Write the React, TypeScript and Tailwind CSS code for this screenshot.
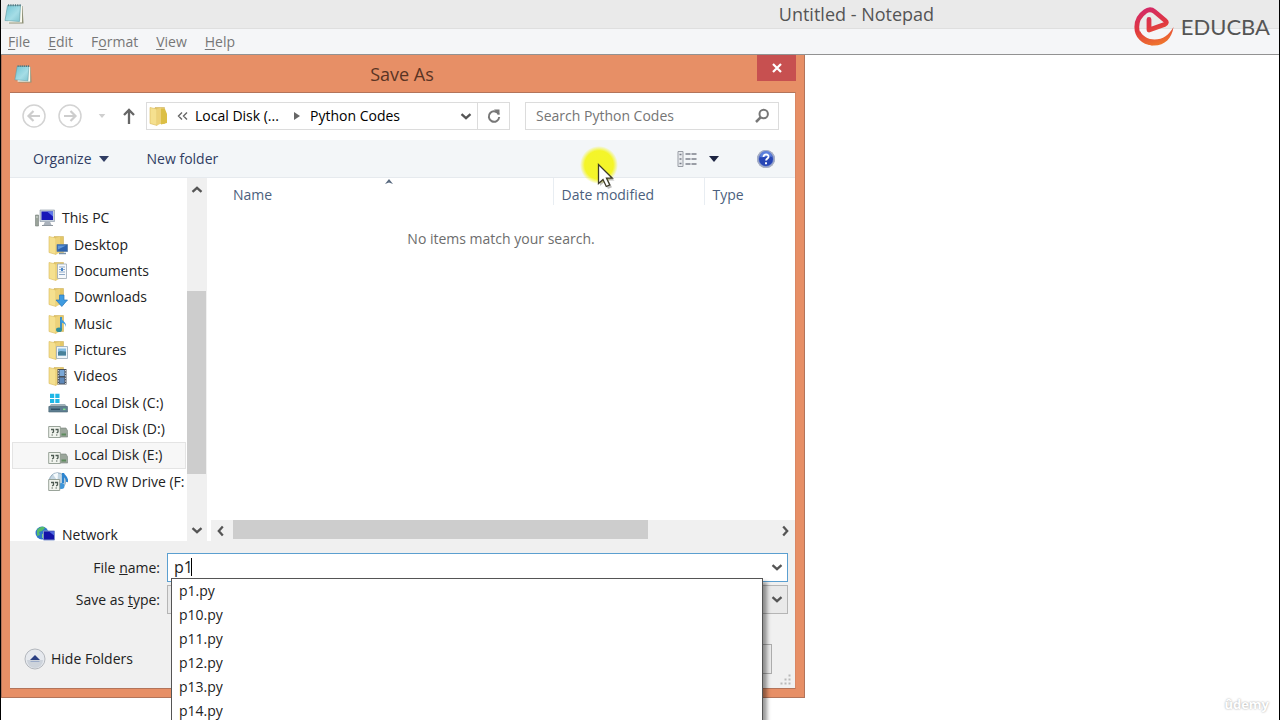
import React, { useState } from "react";

function NotepadIcon({ className }: { className: string }) {
  return (
    <svg viewBox="0 0 20 22" className={className} aria-hidden="true">
      <defs>
        <linearGradient id="pad" x1="0" y1="0" x2="1" y2="1">
          <stop offset="0" stopColor="#6fc3d2" />
          <stop offset=".6" stopColor="#a5dde6" />
          <stop offset="1" stopColor="#7fc4cf" />
        </linearGradient>
      </defs>
      <path d="M4 3h14.5l1 17.500H5z" fill="#8f9278" />
      <path d="M4 3h14v16.500H4z" fill="#fbfaf0" />
      <path d="M3.500 2.500h13L15.500 18.500 1 17.500z" fill="url(#pad)" stroke="#5d9aa5" strokeWidth=".6" />
      <path d="M4 2.200h13.500" stroke="#4e7780" strokeWidth="2" strokeDasharray="1.2 1.1" />
    </svg>
  );
}

type FolderKind = "desktop" | "documents" | "downloads" | "music" | "pictures" | "videos" | "plain";

function FolderIcon({ kind, className }: { kind: FolderKind; className: string }) {
  return (
    <svg viewBox="0 0 20 20" className={className} aria-hidden="true">
      <path d="M6 1.500h9.500v16H6z" fill="#e3c768" stroke="#c9a94c" strokeWidth=".5" />
      <path d="M1 1.500l7 1.500v16.500l-7-2z" fill="#f5e08f" stroke="#d8b95c" strokeWidth=".6" />
      <path d="M8 3l4-1.500v16L8 19.500z" fill="#edd27a" />
      {kind === "plain" && <path d="M12 3h4l2 5v9l-6 1.500z" fill="#dcbf45" />}
      {kind === "desktop" && (
        <g>
          <path d="M9 9.500h10.500v7H9z" fill="#2c62ae" stroke="#5b7fa5" strokeWidth=".8" />
          <path d="M10 10.500h8l-8 4z" fill="#5f97d8" />
          <path d="M11 18.500h7" stroke="#7b93a8" strokeWidth="1.500" />
        </g>
      )}
      {kind === "documents" && (
        <g>
          <path d="M9.500 3h9v14.500h-9z" fill="#f6f9fc" stroke="#9aa7b5" strokeWidth=".8" />
          <path d="M11 6h6M11 8.500h6M11 11h6M11 13.500h6" stroke="#8fa9c6" />
          <path d="M13 7h2v3h-2z" fill="#4a86c9" />
        </g>
      )}
      {kind === "downloads" && (
        <path d="M11.500 8h4.500v5h3.500L13.800 19.500 8 13h3.500z" fill="#3f9be0" stroke="#2777ba" strokeWidth=".7" />
      )}
      {kind === "music" && (
        <g>
          <path d="M13 3v12" stroke="#2c8bd0" strokeWidth="1.800" />
          <path d="M13 3c0 4 6 4.500 5 10c-.5-3-2.500-4-5-4.500z" fill="#3c9be0" />
          <ellipse cx="11" cy="15.800" rx="3" ry="2.300" fill="#2f8f9b" />
        </g>
      )}
      {kind === "pictures" && (
        <g>
          <path d="M8.500 6.500h11v12h-11z" fill="#eef5fa" stroke="#98a9b8" strokeWidth=".8" />
          <path d="M10 8.500h8v7h-8z" fill="#85bce2" />
          <path d="M10 12c3-2 5 0 8-.5v4h-8z" fill="#48819a" />
        </g>
      )}
      {kind === "videos" && (
        <g>
          <path d="M9.500 3h9v15.500h-9z" fill="#494f58" />
          <path d="M11.500 4h5v6h-5z" fill="#79a7d6" />
          <path d="M11.500 11.500h5v6h-5z" fill="#5e88b9" />
          <path d="M10.400 4v14M17.600 4v14" stroke="#d8dbe0" strokeDasharray="1.300 1.300" />
        </g>
      )}
    </svg>
  );
}

function ComputerIcon() {
  return (
    <svg viewBox="0 0 20 18" className="h-[18px] w-5 shrink-0" aria-hidden="true">
      <path d="M.5 6h3v11h-3z" fill="#9aa39a" stroke="#75807a" strokeWidth=".6" />
      <path d="M1.200 8h1.600" stroke="#eef2ee" />
      <path d="M5 1h14.500v11.500H5z" fill="#c5cfda" stroke="#8895a3" strokeWidth=".6" />
      <path d="M6.500 2.500h11.500v8.500H6.500z" fill="#1718b8" />
      <path d="M12 2.500h6v5z" fill="#5d77ea" />
      <path d="M10 12.500h5l1.500 3.500h-8z" fill="#aab2bc" />
      <path d="M7 16.500h11" stroke="#8e979f" />
    </svg>
  );
}

function NetworkIcon() {
  return (
    <svg viewBox="0 0 20 18" className="h-[18px] w-5 shrink-0" aria-hidden="true">
      <circle cx="7" cy="7" r="6.500" fill="#2f77cc" />
      <path d="M2 4c3-4 7-4 8-2L7 5 4 6l1 3-3 1z" fill="#54bb6a" />
      <path d="M7 8l4-1v5H7z" fill="#82d08c" />
      <path d="M8.500 5h11v9h-11z" fill="#1414a8" stroke="#7f93c9" />
      <path d="M14 5.500h5v4z" fill="#4f68e0" />
      <path d="M11 16h7" stroke="#5a76d8" strokeWidth="2" />
    </svg>
  );
}

function DriveIcon({ system }: { system?: boolean }) {
  return (
    <svg viewBox="0 0 20 20" className="size-5 shrink-0" aria-hidden="true">
      {system ? (
        <g>
          <path d="M2 .8h4.200v4.200H2zM7.300.8h4.200v4.200H7.300zM2 6h4.200v4H2zM7.300 6h4.200v4H7.300z" fill="#1fb7e6" />
          <path d="M3 11h14l2.500 3H.8z" fill="#9fb0b8" />
          <path d="M.8 13.500h18.700v5.500H.8z" fill="#5f7f92" stroke="#4c6472" strokeWidth=".6" />
          <path d="M3 16.300h9" stroke="#2f4e63" strokeWidth="1.500" />
          <path d="M15 16.300h2.500" stroke="#7be08a" strokeWidth="1.500" />
        </g>
      ) : (
        <g>
          <path d="M12 9h6l1.700 3v6H11z" fill="#9ba69b" stroke="#77827a" strokeWidth=".6" />
          <path d="M13.500 15.500h4.500" stroke="#5d8b5d" strokeWidth="2" />
          <path d="M.7 7.500h11.600v11H.7z" fill="#f1f4ee" stroke="#8e9a8e" strokeWidth=".9" />
          <path d="M3 10.500h2.500v2.500l-1.300 1M7.500 10.500H10v2.500l-1.300 1M4.200 15.500v1M8.700 15.500v1" fill="none" stroke="#4d5a52" strokeWidth="1.300" />
        </g>
      )}
    </svg>
  );
}

function DvdIcon() {
  return (
    <svg viewBox="0 0 20 20" className="size-5 shrink-0" aria-hidden="true">
      <circle cx="9.500" cy="9" r="8.200" fill="#c4d6e2" stroke="#7f9cb0" strokeWidth=".8" />
      <path d="M9.500 9L5 2.500A8 8 0 0 1 10 1z" fill="#f6fbfd" />
      <circle cx="9.500" cy="9" r="2" fill="#f6fafc" />
      <path d="M15 1v10M15 1c0 3 5 4 4 9" fill="none" stroke="#2e85cf" strokeWidth="2.200" />
      <circle cx="13.500" cy="14" r="3" fill="#3f96da" />
      <path d="M.7 7.500h11v11H.7z" fill="#f1f4ee" stroke="#8e9a8e" strokeWidth=".9" />
      <path d="M3 10.500h2.500v2.500l-1.300 1M7 10.500h2.500v2.500l-1.300 1M4.200 15.500v1M8.200 15.500v1" fill="none" stroke="#4d5a52" strokeWidth="1.300" />
    </svg>
  );
}

type Direction = "up" | "down" | "left" | "right";

const CHEVRONS: Record<Direction, string> = {
  up: "M1.500 7.800L6 3.800l4.500 4",
  down: "M1.500 4.200L6 8.200l4.500-4",
  left: "M7.800 1.500L3.800 6l4 4.500",
  right: "M4.200 1.500L8.200 6l-4 4.500",
};

function Chevron({ to }: { to: Direction }) {
  return (
    <svg viewBox="0 0 12 12" className="size-3 shrink-0" aria-hidden="true">
      <path d={CHEVRONS[to]} fill="none" stroke="#555" strokeWidth="2.300" />
    </svg>
  );
}

function ArrowCircle({ flip }: { flip?: boolean }) {
  return (
    <svg viewBox="0 0 24 24" className={flip ? "size-6 -scale-x-100" : "size-6"} aria-hidden="true">
      <circle cx="12" cy="12" r="11" fill="#fff" stroke="#d3d3d3" strokeWidth="1.500" />
      <path d="M18 12H7M11.500 7l-5 5 5 5" fill="none" stroke="#cdcdcd" strokeWidth="2.200" />
    </svg>
  );
}

function Caret({ className }: { className: string }) {
  return (
    <svg viewBox="0 0 10 6" className={className} aria-hidden="true">
      <path d="M0 0h10L5 6z" fill="currentColor" />
    </svg>
  );
}

const MENUS: [string, string, string][] = [
  ["", "F", "ile"],
  ["", "E", "dit"],
  ["F", "o", "rmat"],
  ["", "V", "iew"],
  ["", "H", "elp"],
];

const PLACES: { name: string; icon: React.ReactNode; selected?: boolean }[] = [
  { name: "Desktop", icon: <FolderIcon kind="desktop" className="size-5 shrink-0" /> },
  { name: "Documents", icon: <FolderIcon kind="documents" className="size-5 shrink-0" /> },
  { name: "Downloads", icon: <FolderIcon kind="downloads" className="size-5 shrink-0" /> },
  { name: "Music", icon: <FolderIcon kind="music" className="size-5 shrink-0" /> },
  { name: "Pictures", icon: <FolderIcon kind="pictures" className="size-5 shrink-0" /> },
  { name: "Videos", icon: <FolderIcon kind="videos" className="size-5 shrink-0" /> },
  { name: "Local Disk (C:)", icon: <DriveIcon system /> },
  { name: "Local Disk (D:)", icon: <DriveIcon /> },
  { name: "Local Disk (E:)", icon: <DriveIcon />, selected: true },
  { name: "DVD RW Drive (F:", icon: <DvdIcon /> },
];

const SUGGESTIONS = ["p1.py", "p10.py", "p11.py", "p12.py", "p13.py", "p14.py"];

function NavigationBar() {
  return (
    <div className="flex h-[47px] items-center bg-white pr-4 pb-0.5 pl-3">
      <button aria-label="Back"><ArrowCircle /></button>
      <button aria-label="Forward" className="ml-3"><ArrowCircle flip /></button>
      <button aria-label="Recent locations" className="ml-3 px-1 text-[#cfcfcf]">
        <Caret className="h-1 w-2" />
      </button>
      <button aria-label="Up" className="ml-[13px]">
        <svg viewBox="0 0 12 16" className="h-4 w-3">
          <path d="M6 16V2M1 7l5-5 5 5" fill="none" stroke="#666" strokeWidth="2.300" />
        </svg>
      </button>
      <div className="ml-[11px] flex h-7 min-w-0 grow items-center border border-[#dcdcdc] text-black">
        <FolderIcon kind="plain" className="ml-[2px] size-5 shrink-0" />
        <svg viewBox="0 0 12 10" className="ml-2 h-[10px] w-3 shrink-0" aria-hidden="true">
          <path d="M5 1.500L1.500 5 5 8.500M10 1.500L6.500 5 10 8.500" fill="none" stroke="#666" strokeWidth="1.400" />
        </svg>
        <button className="ml-1.5 w-24 shrink-0 text-left">Local Disk (...</button>
        <svg viewBox="0 0 6 8" className="ml-[3px] h-2 w-[6px] shrink-0" aria-hidden="true">
          <path d="M0 0l6 4-6 4z" fill="#666" />
        </svg>
        <button className="ml-2.5 grow truncate text-left">Python Codes</button>
        <button aria-label="Previous locations" className="px-1"><Chevron to="down" /></button>
        <button aria-label="Refresh" className="ml-px flex h-full w-8 shrink-0 items-center justify-center border-l border-[#dcdcdc]">
          <svg viewBox="0 0 16 16" className="size-4">
            <path d="M12.800 6.500A5.200 5.200 0 1 0 13.200 9" fill="none" stroke="#777" strokeWidth="2" />
            <path d="M8 1.500h5.500V7z" fill="#777" />
          </svg>
        </button>
      </div>
      <div className="ml-[15px] flex h-7 w-[254px] shrink-0 items-center border border-[#dcdcdc] pr-2 pl-2.5">
        <input
          aria-label="Search Python Codes"
          placeholder="Search Python Codes"
          className="min-w-0 grow bg-transparent outline-none placeholder:text-[#757575]"
        />
        <svg viewBox="0 0 16 16" className="size-4 shrink-0" aria-hidden="true">
          <circle cx="9.700" cy="6" r="4.200" fill="none" stroke="#777" strokeWidth="2" />
          <path d="M6.800 9.200L2 14" stroke="#777" strokeWidth="2.500" />
        </svg>
      </div>
    </div>
  );
}

function Toolbar() {
  return (
    <div className="flex h-[38px] items-center border-b border-[#e6eaee] bg-[#f3f6f8] pr-[19px] pl-[23px] text-[#303d63]">
      <button className="flex items-center gap-[7px]">
        Organize
        <Caret className="h-[6px] w-[10px]" />
      </button>
      <button className="ml-[38px]">New folder</button>
      <button aria-label="Change view" className="ml-auto flex items-center gap-3">
        <svg viewBox="0 0 20 16" className="h-4 w-5" aria-hidden="true">
          <path d="M1 .5h5v15H1z" fill="#e9ebee" stroke="#989da5" />
          <path d="M2.500 3.500h2M2.500 8h2M2.500 12.500h2" stroke="#777d88" strokeWidth="1.500" />
          <path d="M8.500 3h11M8.500 8h11M8.500 13h11" stroke="#7d818b" strokeWidth="1.400" strokeDasharray="5 1" />
        </svg>
        <Caret className="h-[6px] w-[10px] text-[#1c2442]" />
      </button>
      <button aria-label="Help" className="ml-[37px]">
        <svg viewBox="0 0 20 20" className="size-5">
          <circle cx="10" cy="10" r="9" fill="#7e93cf" />
          <circle cx="10" cy="10" r="8.500" fill="none" stroke="#aab0c2" strokeWidth="1.200" />
          <circle cx="10" cy="10" r="7" fill="#2746b5" />
          <path d="M4 8a6 6 0 0 1 12 0c-4-2-8 1-12 0z" fill="#5c80dc" />
          <path d="M7.500 8c0-3.500 5.500-3.200 5 0-.3 1.600-2.400 1.600-2.400 3.600M10 13.200v2" fill="none" stroke="#fff" strokeWidth="1.900" />
        </svg>
      </button>
    </div>
  );
}

function FolderTree() {
  return (
    <nav aria-label="Folders" className="flex h-full w-[197px] shrink-0 text-[#222]">
      <div className="min-w-0 grow overflow-hidden pt-[27px]">
        <div className="grid h-[290px] auto-rows-fr">
          <a href="#this-pc" className="flex items-center gap-[7px] pl-[25px] whitespace-nowrap">
            <ComputerIcon />
            This PC
          </a>
          {PLACES.map((place) => (
            <a
              key={place.name}
              href="#place"
              className={
                place.selected
                  ? "mr-px ml-0.5 flex items-center gap-1.5 border border-[#e4e4e4] bg-[#f7f7f7] pl-[35px] whitespace-nowrap"
                  : "flex items-center gap-1.5 pl-[38px] whitespace-nowrap"
              }
            >
              {place.icon}
              {place.name}
            </a>
          ))}
        </div>
        <a href="#network" className="mt-[30px] flex h-5 items-center gap-[7px] pl-[25px] leading-[16px] whitespace-nowrap">
          <NetworkIcon />
          Network
        </a>
      </div>
      <div className="flex w-5 shrink-0 flex-col items-center bg-[#f0f0f0] pr-px">
        <button aria-label="Scroll up" className="flex h-6 items-center"><Chevron to="up" /></button>
        <div className="mt-[89px] h-[183px] w-full bg-[#cdcdcd]" />
        <button aria-label="Scroll down" className="mt-auto flex h-[22px] items-center"><Chevron to="down" /></button>
      </div>
    </nav>
  );
}

function FileList() {
  return (
    <div className="flex h-full min-w-0 grow flex-col">
      <table className="w-full table-fixed text-left">
        <thead>
          <tr className="h-[27px] text-[#4c5f7d]">
            <th className="relative w-[346px] border-r border-[#e8edf2] pt-1.5 pl-[26px] font-normal">
              Name
              <svg viewBox="0 0 8 5" className="absolute top-px left-[178px] h-[5px] w-2" aria-hidden="true">
                <path d="M0 5l4-5 4 5-4-1.500z" fill="#5a6b80" />
              </svg>
            </th>
            <th className="w-[151px] border-r border-[#e8edf2] pt-1.5 pl-2 font-normal">Date modified</th>
            <th className="pt-1.5 pl-2 font-normal">Type</th>
          </tr>
        </thead>
        <tbody>
          <tr>
            <td colSpan={3} className="pt-6 text-center text-[#6d6d6d]">No items match your search.</td>
          </tr>
        </tbody>
      </table>
      <div className="mt-auto ml-1 flex h-[21px] items-center bg-[#f0f0f0] pr-1 pl-1">
        <button aria-label="Scroll left" className="mr-1.5"><Chevron to="left" /></button>
        <div className="h-[19px] w-[72%] self-start bg-[#cdcdcd]" />
        <button aria-label="Scroll right" className="ml-auto"><Chevron to="right" /></button>
      </div>
    </div>
  );
}

function FileForm() {
  const [name, setName] = useState("p1");
  return (
    <form className="relative bg-[#f0f0f0] pt-3 pr-[7px] pb-[14px] text-[#222]">
      <div className="flex items-center">
        <label htmlFor="file-name" className="w-[150px] text-right">
          File <u>n</u>ame:
        </label>
        <div className="relative ml-[7px] flex h-[29px] grow items-center border border-[#5b9fd0] bg-white pr-1 pb-0.5 pl-1.5">
          <input
            id="file-name"
            value={name}
            onChange={(event) => setName(event.target.value)}
            className="grow bg-transparent text-base outline-none"
          />
          <span className="absolute top-1 left-[23px] h-[18px] w-px bg-black" />
          <button type="button" aria-label="Show suggestions"><Chevron to="down" /></button>
          <ul className="absolute top-6 right-6 left-[3px] z-10 h-80 border border-[#555] bg-white text-[14px] shadow-[4px_4px_4px_rgba(0,0,0,0.4)]">
            {SUGGESTIONS.map((item) => (
              <li key={item} className="h-6 pl-[7px] leading-6">{item}</li>
            ))}
          </ul>
        </div>
      </div>
      <div className="mt-[3px] flex items-center">
        <label htmlFor="file-type" className="w-[150px] text-right">
          Save as <u>t</u>ype:
        </label>
        <div className="relative ml-[7px] grow">
          <select id="file-type" className="block h-[29px] w-full appearance-none border border-[#b5b5b5] bg-[#e9e9e9]" />
          <span className="pointer-events-none absolute top-2 right-[5px]"><Chevron to="down" /></span>
        </div>
      </div>
      <div className="mt-[30px] flex items-center pr-4 pl-[14px]">
        <button type="button" className="flex items-center gap-[5px]">
          <svg viewBox="0 0 22 22" className="size-[22px]" aria-hidden="true">
            <circle cx="11" cy="11" r="10" fill="#e6e9ee" stroke="#b3b7bd" />
            <path d="M3 12a8 8 0 0 0 16 0z" fill="#cdd3db" />
            <path d="M6 12l5-5 5 5z" fill="#2a3f83" />
            <path d="M6.500 13.500h9" stroke="#9babc9" />
          </svg>
          Hide Folders
        </button>
        <button type="button" aria-label="Cancel" className="ml-auto h-[30px] w-28 border border-[#adadad] bg-[#ececec]" />
      </div>
      <svg viewBox="0 0 12 12" className="absolute right-[3px] bottom-0.5 size-3" aria-hidden="true">
        <path d="M8.500.5h2v2h-2zM8.500 4.500h2v2h-2zM8.500 8.500h2v2h-2zM4.500 4.500h2v2h-2zM4.500 8.500h2v2h-2zM.5 8.500h2v2h-2z" fill="#b9b9b9" />
      </svg>
    </form>
  );
}

function SaveDialog() {
  return (
    <section
      role="dialog"
      aria-label="Save As"
      className="relative w-full max-w-[804px] border border-t-0 border-[#b3745a] bg-[#e78f66] px-2 pb-2 text-[14px] leading-5"
    >
      <header className="relative flex h-[37px] items-center px-1">
        <NotepadIcon className="h-5 w-[18px]" />
        <h2 className="grow pr-5 text-center text-[18px] text-[#5a3424]">Save As</h2>
        <button aria-label="Close" className="absolute top-0 right-0 flex h-[26px] w-[39px] items-center justify-center bg-[#c75050]">
          <svg viewBox="0 0 10 10" className="size-[10px]" aria-hidden="true">
            <path d="M1 1l8 8M9 1L1 9" stroke="#fff" strokeWidth="2.200" />
          </svg>
        </button>
      </header>
      <div className="border-t border-r border-b border-t-[#b3745a] border-r-[#d98763] border-b-[#b3745a] bg-white">
        <NavigationBar />
        <Toolbar />
        <div className="flex h-[363px]">
          <FolderTree />
          <FileList />
        </div>
        <FileForm />
      </div>
      <svg viewBox="0 0 40 48" className="pointer-events-none absolute top-[91px] left-[577px] h-12 w-10" aria-hidden="true">
        <defs>
          <radialGradient id="halo">
            <stop offset=".75" stopColor="#f4f51f" stopOpacity=".95" />
            <stop offset="1" stopColor="#f4f51f" stopOpacity="0" />
          </radialGradient>
        </defs>
        <circle cx="20" cy="19" r="19" fill="url(#halo)" />
        <path d="M21 20v20l4.500-4 3.500 7 4-1.800-3.500-6.700h6z" fill="#000" opacity=".25" />
        <path d="M19.500 18.500v19l4.500-4 3.300 7 3.500-1.600-3.300-6.700h5.800z" fill="#fff" stroke="#3d3a28" strokeWidth="1.300" />
      </svg>
    </section>
  );
}

function BrandLogo() {
  return (
    <div className="absolute top-[7px] right-[9px] flex items-center gap-[7px]">
      <svg viewBox="0 0 40 40" className="size-10" aria-hidden="true">
        <defs>
          <linearGradient id="brand" gradientUnits="userSpaceOnUse" x1="10" y1="0" x2="22" y2="40">
            <stop offset="0" stopColor="#d2286a" />
            <stop offset=".5" stopColor="#e03840" />
            <stop offset="1" stopColor="#f07a2c" />
          </linearGradient>
        </defs>
        <path
          d="M15 12.500V23L30.500 17.500c2.200-.9 2.400-2.600.7-4L20.500 4.500C17.500 2 14 2.300 11 4.700C5.500 8.500 2.800 14 2.800 20c0 9 6.500 15.500 15.200 16"
          fill="none"
          stroke="url(#brand)"
          strokeWidth="4.800"
          strokeLinecap="round"
          strokeLinejoin="round"
        />
        <path
          d="M6 29C9 35 14 38.500 20 38.500C31 38.500 38 31 39.500 20C35 28 29 32.500 20.500 32.500C14 32.500 9 29.500 6 24z"
          fill="url(#brand)"
        />
      </svg>
      <span className="font-[Lato] text-[22px] leading-6 text-[#555]">EDUCBA</span>
    </div>
  );
}

export default function App() {
  return (
    <div className="relative flex h-screen flex-col overflow-hidden border-x border-black bg-white font-['Open_Sans','Noto_Sans',sans-serif]">
      <header className="flex h-7 shrink-0 items-center bg-[#eaeaea] pl-[3px]">
        <NotepadIcon className="h-[22px] w-5" />
        <h1 className="ml-[59.200%] text-[18px] text-[#555]">Untitled - Notepad</h1>
      </header>
      <nav aria-label="Menu bar" className="flex h-[27px] shrink-0 items-center gap-[18px] border-t border-b border-t-[#dfdfdf] border-b-[#929292] bg-[#f5f6f8] pl-[7px] text-[14px] text-[#777]">
        {MENUS.map(([before, key, after]) => (
          <button key={before + key + after}>
            {before}
            <u className="underline-offset-2">{key}</u>
            {after}
          </button>
        ))}
      </nav>
      <main className="min-h-0 grow">
        <SaveDialog />
      </main>
      <BrandLogo />
      <span className="absolute right-2.5 bottom-1.5 text-[13px] leading-5 font-bold text-white [text-shadow:0_0_2px_#999]">ûdemy</span>
    </div>
  );
}
